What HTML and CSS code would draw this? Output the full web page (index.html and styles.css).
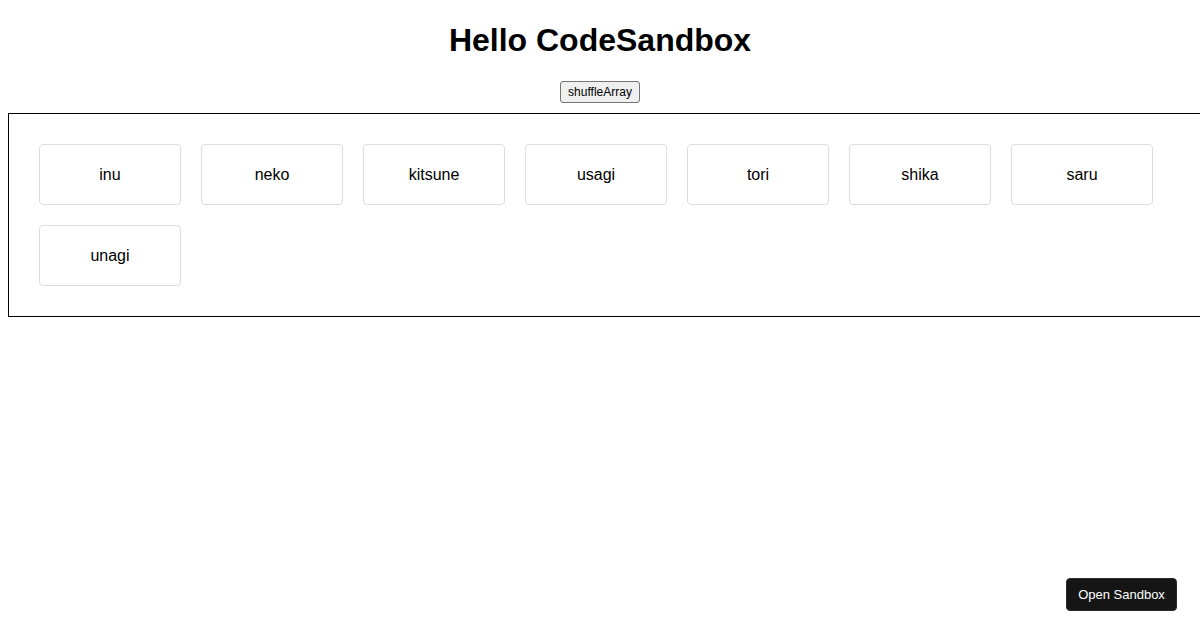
FILE: index.html
```html
<!DOCTYPE html>
<html lang="en">
<head>
<meta charset="utf-8">
<title>Hello CodeSandbox</title>
<link rel="stylesheet" href="styles.css">
</head>
<body>
<div class="page">
  <div class="app">
    <h1 class="title">Hello CodeSandbox</h1>
    <div class="controls">
      <button class="shuffle" type="button">shuffleArray</button>
    </div>
    <div class="board">
      <div class="card">inu</div>
      <div class="card">neko</div>
      <div class="card">kitsune</div>
      <div class="card">usagi</div>
      <div class="card">tori</div>
      <div class="card">shika</div>
      <div class="card">saru</div>
      <div class="card">unagi</div>
    </div>
  </div>
</div>
<a class="open-sandbox" href="#">Open Sandbox</a>
</body>
</html>
```

FILE: styles.css
```css
body {
  margin: 0;
  font-family: "Liberation Sans", Arial, sans-serif;
  color: #000;
  background: #fff;
}
.page {
  overflow: hidden;
  padding: 22px 0 8px;
}
.app {
  margin: 0 8px;
}
.title {
  text-align: center;
  font-size: 32px;
  font-weight: bold;
  margin: 0 0 22px;
}
.controls {
  display: flex;
  justify-content: center;
  margin-top: 1px;
  margin-bottom: 10px;
}
.shuffle {
  box-sizing: border-box;
  height: 22px;
  padding: 0 7px;
  font-family: "Liberation Sans", Arial, sans-serif;
  font-size: 12px;
  color: #000;
  background: #efefef;
  border: 1px solid #767676;
  border-radius: 3px;
}
.board {
  width: 100%;
  border: 1px solid #000;
  padding: 30px;
  display: flex;
  flex-wrap: wrap;
  gap: 20px;
}
.card {
  box-sizing: border-box;
  width: 142px;
  height: 61px;
  border: 1px solid #dddddd;
  border-radius: 4px;
  display: flex;
  align-items: center;
  justify-content: center;
  font-size: 16px;
}
.open-sandbox {
  position: fixed;
  right: 23px;
  bottom: 19px;
  box-sizing: border-box;
  width: 111px;
  height: 33px;
  display: flex;
  align-items: center;
  justify-content: center;
  background: #151515;
  color: #ffffff;
  font-size: 13px;
  text-decoration: none;
  border-radius: 4px;
  border: 1px solid #2a2a2a;
}
```
